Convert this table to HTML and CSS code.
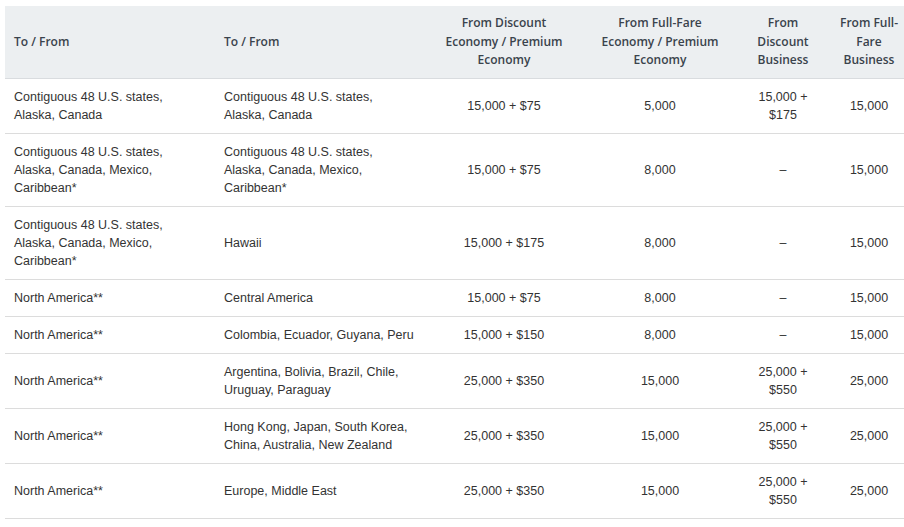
FILE: index.html
```html
<!DOCTYPE html>
<html>
<head>
<meta charset="utf-8">
<link rel="stylesheet" href="styles.css">
</head>
<body>
<table class="awards">
  <colgroup>
    <col class="c1"><col class="c2"><col class="c3"><col class="c4"><col class="c5"><col class="c6">
  </colgroup>
  <thead>
    <tr>
      <th class="left">To / From</th>
      <th class="left">To / From</th>
      <th>From Discount<br>Economy / Premium<br>Economy</th>
      <th>From Full-Fare<br>Economy / Premium<br>Economy</th>
      <th>From<br>Discount<br>Business</th>
      <th>From Full-<br>Fare<br>Business</th>
    </tr>
  </thead>
  <tbody>
    <tr>
      <td class="left">Contiguous 48 U.S. states,<br>Alaska, Canada</td>
      <td class="left">Contiguous 48 U.S. states,<br>Alaska, Canada</td>
      <td>15,000 + $75</td>
      <td>5,000</td>
      <td>15,000 +<br>$175</td>
      <td>15,000</td>
    </tr>
    <tr>
      <td class="left">Contiguous 48 U.S. states,<br>Alaska, Canada, Mexico,<br>Caribbean*</td>
      <td class="left">Contiguous 48 U.S. states,<br>Alaska, Canada, Mexico,<br>Caribbean*</td>
      <td>15,000 + $75</td>
      <td>8,000</td>
      <td>–</td>
      <td>15,000</td>
    </tr>
    <tr>
      <td class="left">Contiguous 48 U.S. states,<br>Alaska, Canada, Mexico,<br>Caribbean*</td>
      <td class="left">Hawaii</td>
      <td>15,000 + $175</td>
      <td>8,000</td>
      <td>–</td>
      <td>15,000</td>
    </tr>
    <tr>
      <td class="left">North America**</td>
      <td class="left">Central America</td>
      <td>15,000 + $75</td>
      <td>8,000</td>
      <td>–</td>
      <td>15,000</td>
    </tr>
    <tr>
      <td class="left">North America**</td>
      <td class="left">Colombia, Ecuador, Guyana, Peru</td>
      <td>15,000 + $150</td>
      <td>8,000</td>
      <td>–</td>
      <td>15,000</td>
    </tr>
    <tr>
      <td class="left">North America**</td>
      <td class="left">Argentina, Bolivia, Brazil, Chile,<br>Uruguay, Paraguay</td>
      <td>25,000 + $350</td>
      <td>15,000</td>
      <td>25,000 +<br>$550</td>
      <td>25,000</td>
    </tr>
    <tr>
      <td class="left">North America**</td>
      <td class="left">Hong Kong, Japan, South Korea,<br>China, Australia, New Zealand</td>
      <td>25,000 + $350</td>
      <td>15,000</td>
      <td>25,000 +<br>$550</td>
      <td>25,000</td>
    </tr>
    <tr>
      <td class="left">North America**</td>
      <td class="left">Europe, Middle East</td>
      <td>25,000 + $350</td>
      <td>15,000</td>
      <td>25,000 +<br>$550</td>
      <td>25,000</td>
    </tr>
  </tbody>
</table>
</body>
</html>
```

FILE: styles.css
```css
html, body {
  margin: 0;
  padding: 0;
  background: #ffffff;
  overflow: hidden;
}
body {
  padding: 6px 0 0 5px;
}
.awards {
  border-collapse: collapse;
  table-layout: fixed;
  width: 904px;
  font-family: "Liberation Sans", Arial, sans-serif;
  font-size: 12.5px;
  line-height: 18px;
  color: #333333;
}
.c1 { width: 210px; }
.c2 { width: 210px; }
.c3 { width: 158px; }
.c4 { width: 154px; }
.c5 { width: 92px; }
.c6 { width: 80px; }
.awards th {
  background: #eceff1;
  font-family: "Open Sans", "Noto Sans", sans-serif;
  font-weight: 600;
  font-size: 12px;
  line-height: 18.5px;
  color: #3a434c;
  padding: 8px 4px;
  text-align: center;
  vertical-align: middle;
  white-space: nowrap;
  border-bottom: 1px solid #d9dcdf;
}
.awards th.left {
  padding-left: 9px;
}
.awards td {
  padding: 9px 9px;
  text-align: center;
  vertical-align: middle;
  border-bottom: 1px solid #dcdcdc;
}
.awards .left {
  text-align: left;
}
```
